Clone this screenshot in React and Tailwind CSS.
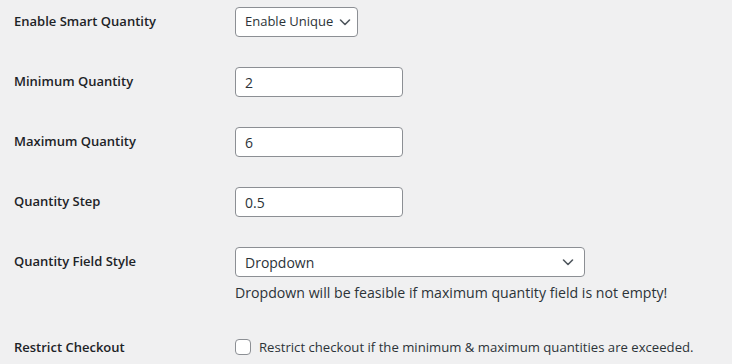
import React from "react";

const Chevron = () => (
  <svg width="16" height="16" viewBox="0 0 16 16" fill="none" className="shrink-0">
    <path d="M3.5 6l4.5 4.5L12.5 6" stroke="#50575e" strokeWidth="1.6" strokeLinecap="round" strokeLinejoin="round" />
  </svg>
);

function Label({ children }) {
  return (
    <div className="w-[221px] shrink-0 h-[30px] flex items-center text-[13px] font-semibold text-[#1d2327]">
      {children}
    </div>
  );
}

function TextInput({ value }) {
  return (
    <div className="w-[168px] h-[30px] flex items-center px-[9px] bg-white border border-[#8c8f94] rounded-[4px] text-[14px] text-[#2c3338]">
      {value}
    </div>
  );
}

function SelectBox({ value, className }) {
  return (
    <div className={"h-[30px] flex items-center justify-between pl-[9px] bg-white border border-[#8c8f94] rounded-[4px] text-[#2c3338] whitespace-nowrap " + className}>
      <span>{value}</span>
      <Chevron />
    </div>
  );
}

export default function App() {
  return (
    <div
      className="w-[732px] h-[364px] overflow-hidden bg-[#f0f0f1] pt-[7px] pl-[14px]"
      style={{ fontFamily: '"Open Sans", "Noto Sans", sans-serif' }}
    >
      <div className="flex flex-col gap-[30px]">
        <div className="flex">
          <Label>Enable Smart Quantity</Label>
          <SelectBox value="Enable Unique" className="w-[123px] text-[13px] pr-[4px]" />
        </div>
        <div className="flex">
          <Label>Minimum Quantity</Label>
          <TextInput value="2" />
        </div>
        <div className="flex">
          <Label>Maximum Quantity</Label>
          <TextInput value="6" />
        </div>
        <div className="flex">
          <Label>Quantity Step</Label>
          <TextInput value="0.5" />
        </div>
        <div className="flex">
          <Label>Quantity Field Style</Label>
          <div className="flex flex-col">
            <SelectBox value="Dropdown" className="w-[350px] text-[14px] pr-[8px]" />
            <p className="mt-[6px] text-[14.15px] leading-[20px] text-[#2c3338]">
              Dropdown will be feasible if maximum quantity field is not empty!
            </p>
          </div>
        </div>
      </div>
      <div className="flex mt-[30px]">
        <Label>Restrict Checkout</Label>
        <label className="flex items-center h-[30px] text-[13.15px] text-[#2c3338]">
          <span className="w-[16px] h-[16px] mr-[8px] -mt-[3px] bg-white border border-[#8c8f94] rounded-[4px]" />
          Restrict checkout if the minimum &amp; maximum quantities are exceeded.
        </label>
      </div>
    </div>
  );
}
